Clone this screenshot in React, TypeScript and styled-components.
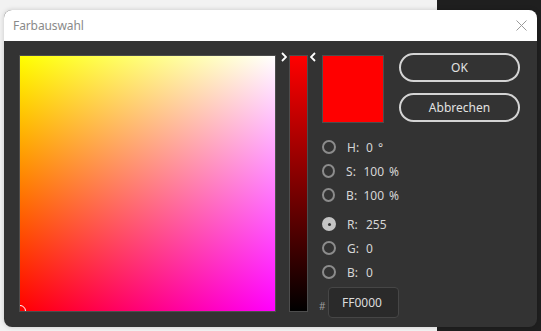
import React from "react";
import styled, { createGlobalStyle } from "styled-components";

const GlobalStyle = createGlobalStyle`
  html, body {
    margin: 0;
    padding: 0;
    width: 541px;
    height: 331px;
    overflow: hidden;
  }
  body {
    background: linear-gradient(to right, #f2f2f2 0, #f2f2f2 437px, #1f1f1f 437px);
    font-family: "Noto Sans", "Open Sans", sans-serif;
  }
`;

const Page = styled.div`
  padding: 10px 4px 0 4px;
`;

const Dialog = styled.div`
  width: 533px;
  height: 317px;
  border-radius: 8px;
  overflow: hidden;
  background: #333333;
  box-shadow: 0 0 5px rgba(0, 0, 0, 0.18);
  display: flex;
  flex-direction: column;
`;

const TitleBar = styled.div`
  height: 31px;
  flex: none;
  background: #ffffff;
  display: flex;
  align-items: center;
  justify-content: space-between;
  padding: 0 10px 0 9px;
  box-sizing: border-box;
`;

const Title = styled.span`
  font-size: 12px;
  color: #8a8a8a;
  letter-spacing: -0.1px;
`;

const CloseButton = styled.button`
  width: 12px;
  height: 12px;
  padding: 0;
  border: none;
  background: none;
  display: flex;
  align-items: center;
  justify-content: center;
`;

const Content = styled.div`
  flex: 1;
  display: flex;
  align-items: flex-start;
  padding: 14px 0 0 15px;
`;

const Field = styled.div`
  position: relative;
  width: 257px;
  height: 257px;
  box-sizing: border-box;
  border: 1px solid #4d4d4d;
  overflow: hidden;
  background-image: linear-gradient(to bottom, #00ff00, #000000),
    linear-gradient(to right, #ff0000, #ff00ff);
  background-blend-mode: screen;
`;

const Marker = styled.div`
  position: absolute;
  left: -6px;
  bottom: -6px;
  width: 12px;
  height: 12px;
  box-sizing: border-box;
  border: 1.5px solid #ffffff;
  border-radius: 50%;
`;

const SliderGroup = styled.div`
  display: flex;
  align-items: flex-start;
  margin-left: 5px;
`;

const Chevron = styled.svg`
  flex: none;
  margin-top: -3px;
`;

const Bar = styled.div`
  width: 19px;
  height: 257px;
  box-sizing: border-box;
  border: 1px solid #4d4d4d;
  background: linear-gradient(to bottom, #ff0000, #000000);
  margin: 0 2px;
`;

const RightPanel = styled.div`
  display: flex;
  align-items: flex-start;
  margin-left: 6px;
`;

const ValueColumn = styled.div`
  width: 77px;
  display: flex;
  flex-direction: column;
`;

const Preview = styled.div<{ $color: string }>`
  width: 62px;
  height: 68px;
  box-sizing: border-box;
  border: 1px solid #4d4d4d;
  background: ${(p) => p.$color};
`;

const RadioList = styled.div`
  display: flex;
  flex-direction: column;
  margin-top: 12px;
`;

const RadioRow = styled.label<{ $gapBefore?: boolean }>`
  height: 24px;
  display: flex;
  align-items: center;
  margin-top: ${(p) => (p.$gapBefore ? "5px" : "0")};
  font-size: 12px;
  color: #d6d6d6;
`;

const Radio = styled.span<{ $checked?: boolean }>`
  width: 14px;
  height: 14px;
  box-sizing: border-box;
  border-radius: 50%;
  border: 2px solid ${(p) => (p.$checked ? "#c4c4c4" : "#8c8c8c")};
  background: ${(p) => (p.$checked ? "#c4c4c4" : "transparent")};
  display: flex;
  align-items: center;
  justify-content: center;
  margin-right: 11px;
  &::after {
    content: "";
    display: ${(p) => (p.$checked ? "block" : "none")};
    width: 3px;
    height: 3px;
    border-radius: 50%;
    background: #333333;
  }
`;

const Label = styled.span`
  width: 19px;
`;

const Unit = styled.span`
  margin-left: 5px;
`;

const HexRow = styled.div`
  display: flex;
  align-items: flex-end;
  margin: 3px 0 0 -3px;
`;

const Hash = styled.span`
  font-size: 10px;
  color: #9a9a9a;
  width: 9px;
  padding-bottom: 5px;
`;

const HexInput = styled.div`
  width: 71px;
  height: 31px;
  box-sizing: border-box;
  border: 1px solid #464646;
  border-radius: 4px;
  background: #2a2a2a;
  color: #dcdcdc;
  font-size: 12px;
  display: flex;
  align-items: center;
  padding-left: 13px;
`;

const ButtonColumn = styled.div`
  display: flex;
  flex-direction: column;
  gap: 11px;
  margin-top: -2px;
`;

const PillButton = styled.button`
  width: 121px;
  height: 29px;
  box-sizing: border-box;
  border: 2px solid #d4d4d4;
  border-radius: 15px;
  background: transparent;
  color: #e2e2e2;
  font-family: "Noto Sans", "Open Sans", sans-serif;
  font-size: 12px;
  padding: 0;
  cursor: pointer;
`;

type Channel = { key: string; label: string; value: string; unit?: string; checked?: boolean; gapBefore?: boolean };

const channels: Channel[] = [
  { key: "h", label: "H:", value: "0", unit: "°" },
  { key: "s", label: "S:", value: "100", unit: "%" },
  { key: "bv", label: "B:", value: "100", unit: "%" },
  { key: "r", label: "R:", value: "255", checked: true, gapBefore: true },
  { key: "g", label: "G:", value: "0" },
  { key: "b", label: "B:", value: "0" },
];

const App = () => {
  return (
    <>
      <GlobalStyle />
      <Page>
        <Dialog>
          <TitleBar>
            <Title>Farbauswahl</Title>
            <CloseButton aria-label="Schließen">
              <svg width="11" height="11" viewBox="0 0 11 11">
                <path d="M0.5 0.5 L10.5 10.5 M10.5 0.5 L0.5 10.5" stroke="#9a9a9a" strokeWidth="1" />
              </svg>
            </CloseButton>
          </TitleBar>
          <Content>
            <Field>
              <Marker />
            </Field>
            <SliderGroup>
              <Chevron width="6" height="10" viewBox="0 0 6 10">
                <path d="M1 1 L5 5 L1 9" fill="none" stroke="#ffffff" strokeWidth="1.8" />
              </Chevron>
              <Bar />
              <Chevron width="6" height="10" viewBox="0 0 6 10">
                <path d="M5 1 L1 5 L5 9" fill="none" stroke="#ffffff" strokeWidth="1.8" />
              </Chevron>
            </SliderGroup>
            <RightPanel>
              <ValueColumn>
                <Preview $color="#ff0000" />
                <RadioList>
                  {channels.map((c) => (
                    <RadioRow key={c.key} $gapBefore={c.gapBefore}>
                      <Radio $checked={c.checked} />
                      <Label>{c.label}</Label>
                      <span>{c.value}</span>
                      {c.unit && <Unit>{c.unit}</Unit>}
                    </RadioRow>
                  ))}
                </RadioList>
                <HexRow>
                  <Hash>#</Hash>
                  <HexInput>FF0000</HexInput>
                </HexRow>
              </ValueColumn>
              <ButtonColumn>
                <PillButton>OK</PillButton>
                <PillButton>Abbrechen</PillButton>
              </ButtonColumn>
            </RightPanel>
          </Content>
        </Dialog>
      </Page>
    </>
  );
};

export default App;
